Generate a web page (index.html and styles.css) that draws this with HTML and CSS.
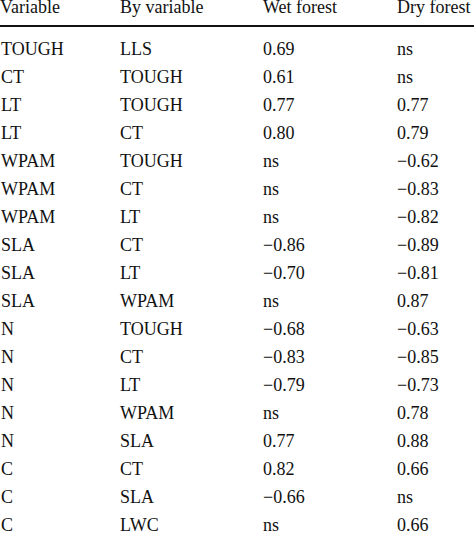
FILE: index.html
```html
<!DOCTYPE html>
<html>
<head>
<meta charset="utf-8">
<link rel="stylesheet" href="styles.css">
</head>
<body>
<div class="table">
  <div class="row head">
    <div class="c1">Variable</div><div class="c2">By variable</div><div class="c3">Wet forest</div><div class="c4">Dry forest</div>
  </div>
  <div class="body">
    <div class="row"><div class="c1">TOUGH</div><div class="c2">LLS</div><div class="c3">0.69</div><div class="c4">ns</div></div>
    <div class="row"><div class="c1">CT</div><div class="c2">TOUGH</div><div class="c3">0.61</div><div class="c4">ns</div></div>
    <div class="row"><div class="c1">LT</div><div class="c2">TOUGH</div><div class="c3">0.77</div><div class="c4">0.77</div></div>
    <div class="row"><div class="c1">LT</div><div class="c2">CT</div><div class="c3">0.80</div><div class="c4">0.79</div></div>
    <div class="row"><div class="c1">WPAM</div><div class="c2">TOUGH</div><div class="c3">ns</div><div class="c4">−0.62</div></div>
    <div class="row"><div class="c1">WPAM</div><div class="c2">CT</div><div class="c3">ns</div><div class="c4">−0.83</div></div>
    <div class="row"><div class="c1">WPAM</div><div class="c2">LT</div><div class="c3">ns</div><div class="c4">−0.82</div></div>
    <div class="row"><div class="c1">SLA</div><div class="c2">CT</div><div class="c3">−0.86</div><div class="c4">−0.89</div></div>
    <div class="row"><div class="c1">SLA</div><div class="c2">LT</div><div class="c3">−0.70</div><div class="c4">−0.81</div></div>
    <div class="row"><div class="c1">SLA</div><div class="c2">WPAM</div><div class="c3">ns</div><div class="c4">0.87</div></div>
    <div class="row"><div class="c1">N</div><div class="c2">TOUGH</div><div class="c3">−0.68</div><div class="c4">−0.63</div></div>
    <div class="row"><div class="c1">N</div><div class="c2">CT</div><div class="c3">−0.83</div><div class="c4">−0.85</div></div>
    <div class="row"><div class="c1">N</div><div class="c2">LT</div><div class="c3">−0.79</div><div class="c4">−0.73</div></div>
    <div class="row"><div class="c1">N</div><div class="c2">WPAM</div><div class="c3">ns</div><div class="c4">0.78</div></div>
    <div class="row"><div class="c1">N</div><div class="c2">SLA</div><div class="c3">0.77</div><div class="c4">0.88</div></div>
    <div class="row"><div class="c1">C</div><div class="c2">CT</div><div class="c3">0.82</div><div class="c4">0.66</div></div>
    <div class="row"><div class="c1">C</div><div class="c2">SLA</div><div class="c3">−0.66</div><div class="c4">ns</div></div>
    <div class="row"><div class="c1">C</div><div class="c2">LWC</div><div class="c3">ns</div><div class="c4">0.66</div></div>
  </div>
</div>
</body>
</html>
```
FILE: styles.css
```css
html, body {
  margin: 0;
  padding: 0;
  background: #fff;
  overflow: hidden;
}
body {
  width: 474px;
  height: 535px;
  font-family: "Liberation Serif", "Times New Roman", serif;
  font-size: 18px;
  color: #111;
}
.row {
  display: grid;
  grid-template-columns: 120px 143px 134px 77px;
  line-height: 28px;
  white-space: nowrap;
}
.c1 {
  padding-left: 1px;
}
.head {
  line-height: 14px;
  padding-bottom: 11px;
  border-bottom: 2px solid #111;
}
.head .c1 {
  padding-left: 0;
}
.body {
  padding-top: 8px;
}
```
